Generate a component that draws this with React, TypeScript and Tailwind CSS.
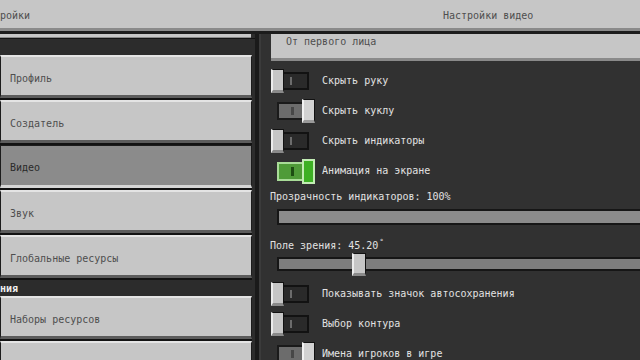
import React from 'react';

type ToggleState = 'off' | 'dim' | 'on';

function Toggle({ state }: { state: ToggleState }) {
  if (state === 'off') {
    return (
      <div className="relative w-[46px] h-[24px] shrink-0">
        <div className="absolute left-[12px] top-[3px] w-[27px] h-[18px] bg-[#2a2a2a] border-2 border-[#121212]">
          <div className="absolute left-[6px] top-[3px] w-[2px] h-[8px] bg-[#6c6c6c]" />
        </div>
        <div className="absolute left-[1px] top-0 w-[13px] h-[24px] border border-[#121212] bg-[#c6c6c6] border-l-2 border-l-[#ececec] border-b-[3px] border-b-[#8a8a8a]" />
      </div>
    );
  }
  if (state === 'dim') {
    return (
      <div className="relative w-[46px] h-[24px] shrink-0">
        <div className="absolute left-[7px] top-[3px] w-[27px] h-[18px] bg-[#6c6c6c] border-2 border-[#1a1a1a]">
          <div className="absolute left-[12px] top-[3px] w-[3px] h-[8px] bg-[#474747]" />
        </div>
        <div className="absolute left-[32px] top-0 w-[13px] h-[24px] border border-[#121212] bg-[#d2d2d2] border-l-2 border-l-[#f2f2f2] border-b-[3px] border-b-[#9a9a9a]" />
      </div>
    );
  }
  return (
    <div className="relative w-[46px] h-[24px] shrink-0">
      <div className="absolute left-[7px] top-[3px] w-[27px] h-[19px] bg-[#4f9b38] border-2 border-[#a9dc98]">
        <div className="absolute left-[12px] top-[3px] w-[3px] h-[9px] bg-[#1d4d12]" />
      </div>
      <div className="absolute left-[32px] top-0 w-[13px] h-[25px] bg-[#3db024] border-2 border-[#c2ecb4]" />
    </div>
  );
}

function ToggleRow({ state, label, className = '' }: { state: ToggleState; label: string; className?: string }) {
  return (
    <div className={'h-[30px] shrink-0 flex items-center ' + className}>
      <Toggle state={state} />
      <span className="ml-[6px] text-[#e2e2e2]">{label}</span>
    </div>
  );
}

function NavButton({ label, active = false }: { label: string; active?: boolean }) {
  return (
    <div className="h-[45px] w-[252px] shrink-0 border-b-2 border-[#121212]">
      {active ? (
        <div className="h-full border border-[#1c1c1c] bg-[#8b8b8b] border-b-[3px] border-b-[#d6d6d6] flex items-center pl-[9px] pt-[5px] text-[#2a2a2a]">
          {label}
        </div>
      ) : (
        <div className="h-full border border-[#1c1c1c] bg-[#c6c6c6] border-t-2 border-t-[#e4e4e4] border-b-[3px] border-b-[#5c5c5c] flex items-center pl-[9px] pt-[5px] text-[#4e4e4e]">
          {label}
        </div>
      )}
    </div>
  );
}

export default function App() {
  return (
    <div
      className="w-[640px] h-[360px] overflow-hidden flex flex-col bg-[#313131] text-[10px] leading-none"
      style={{ fontFamily: '"DejaVu Sans Mono", "Liberation Mono", monospace' }}
    >
      <header className="shrink-0 flex flex-col">
        <div className="h-[28px] flex items-center pt-[3px] bg-[#c6c6c6] text-[#4e4e4e]">
          <span className="w-[443px]">ройки</span>
          <span>Настройки видео</span>
        </div>
        <div className="h-[3px] bg-[#8a8a8a]" />
        <div className="h-[3px] bg-[#1c1c1c]" />
      </header>

      <div className="flex-1 flex min-h-0">
        <aside className="w-[255px] shrink-0 bg-[#2c2c2c] flex flex-col">
          <div className="h-[4px] w-[251px] shrink-0 bg-[#c6c6c6] border-b border-[#8a8a8a]" />
          <div className="h-[17px] shrink-0 border-t border-[#121212]" />
          <NavButton label="Профиль" />
          <NavButton label="Создатель" />
          <NavButton label="Видео" active />
          <NavButton label="Звук" />
          <NavButton label="Глобальные ресурсы" />
          <div className="h-[16px] shrink-0 flex items-center pt-[2px]">
            <span className="text-[#f0f0f0] font-bold">ния</span>
          </div>
          <NavButton label="Наборы ресурсов" />
          <NavButton label="" />
        </aside>

        <div className="w-[4px] shrink-0 bg-[#1a1a1a]" />

        <main className="flex-1 min-w-0 flex flex-col pl-[9px] bg-[#313131] border-l-2 border-l-[#3b3b3b]">
          <div className="h-[27px] shrink-0 ml-[1px] -mr-[2px] bg-[#c6c6c6] border-b-[3px] border-b-[#8a8a8a] pl-[15px] pt-[3px] text-[#4e4e4e]">
            От первого лица
          </div>

          <ToggleRow state="off" label="Скрыть руку" className="mt-[5px]" />
          <ToggleRow state="dim" label="Скрыть куклу" />
          <ToggleRow state="off" label="Скрыть индикаторы" />
          <ToggleRow state="on" label="Анимация на экране" />

          <div className="h-[20px] shrink-0 flex items-center pt-[2px] text-[#e2e2e2]">Прозрачность индикаторов: 100%</div>
          <div className="h-[22px] shrink-0 flex items-center pl-[7px]">
            <div className="h-[16px] flex-1 -mr-[4px] bg-[#8b8b8b] border-2 border-[#161616]" />
          </div>

          <div className="h-[26px] shrink-0 pt-[9px] flex items-center text-[#e2e2e2]">
            Поле зрения: 45.20<sup className="text-[7px] -top-[4px] ml-[1px]">°</sup>
          </div>
          <div className="h-[20px] shrink-0 flex items-center pl-[7px]">
            <div className="relative h-[14px] flex-1 -mr-[4px] bg-[#7e7e7e] border-2 border-[#161616]">
              <div className="absolute left-[73px] -top-[6px] w-[14px] h-[23px] border border-[#121212] bg-[#c6c6c6] border-l-2 border-l-[#ececec] border-b-[3px] border-b-[#8a8a8a]" />
            </div>
          </div>

          <ToggleRow state="off" label="Показывать значок автосохранения" className="mt-[5px]" />
          <ToggleRow state="off" label="Выбор контура" />
          <ToggleRow state="dim" label="Имена игроков в игре" />
        </main>
      </div>
    </div>
  );
}
